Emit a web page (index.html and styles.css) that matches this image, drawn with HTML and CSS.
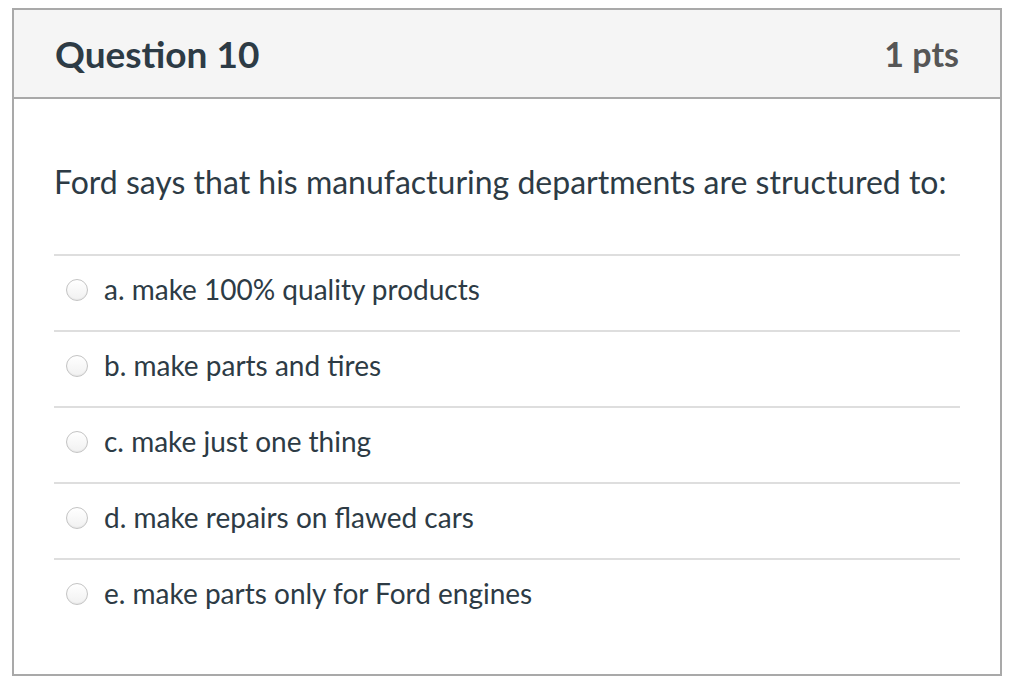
FILE: index.html
```html
<!DOCTYPE html>
<html lang="en">
<head>
<meta charset="utf-8">
<title>Question 10</title>
<link rel="stylesheet" href="styles.css">
</head>
<body>
<div class="page">
  <div class="card">
    <div class="card-header">
      <h2 class="q-title">Question 10</h2>
      <span class="q-points">1 pts</span>
    </div>
    <div class="card-body">
      <p class="q-text">Ford says that his manufacturing departments are structured to:</p>
      <ul class="answers">
        <li class="answer"><span class="radio"></span><span class="label">a. make 100% quality products</span></li>
        <li class="answer"><span class="radio"></span><span class="label">b. make parts and tires</span></li>
        <li class="answer"><span class="radio"></span><span class="label">c. make just one thing</span></li>
        <li class="answer"><span class="radio"></span><span class="label">d. make repairs on flawed cars</span></li>
        <li class="answer"><span class="radio"></span><span class="label">e. make parts only for Ford engines</span></li>
      </ul>
    </div>
  </div>
</div>
</body>
</html>
```
FILE: styles.css
```css
html, body {
  margin: 0;
  padding: 0;
  background: #ffffff;
}
body {
  font-family: Lato, "Liberation Sans", sans-serif;
  color: #2d3b45;
}
.page {
  padding: 8px 22px 0 12px;
}
.card {
  border: 2px solid #a9a9a9;
  height: 664px;
  box-sizing: content-box;
}
.card-header {
  height: 87px;
  background: #f5f5f5;
  border-bottom: 2px solid #a9a9a9;
  display: flex;
  align-items: center;
  justify-content: space-between;
  padding: 0 41px;
}
.q-title {
  margin: 0;
  font-size: 37px;
  font-weight: 700;
  color: #2d3b45;
  line-height: 1;
}
.q-points {
  font-size: 34px;
  font-weight: 700;
  color: #565656;
  line-height: 1;
}
.card-body {
  padding: 62px 40px 40px;
}
.q-text {
  margin: 0 0 51px;
  font-size: 32px;
  line-height: 42px;
}
.answers {
  list-style: none;
  margin: 0;
  padding: 0;
}
.answer {
  display: flex;
  align-items: center;
  gap: 16px;
  height: 74px;
  box-sizing: border-box;
  height: 76px;
  padding: 0 0 6px 12px;
  border-top: 2px solid #dedede;
}
.radio {
  width: 22px;
  height: 22px;
  box-sizing: border-box;
  border-radius: 50%;
  border: 1px solid #c4c4c4;
  background: linear-gradient(#ffffff, #f1f1f1);
  box-shadow: inset 0 -1px 1px rgba(0,0,0,0.04);
  flex: none;
}
.label {
  font-size: 28px;
  line-height: 1.2;
  color: #2d3b45;
}
```
